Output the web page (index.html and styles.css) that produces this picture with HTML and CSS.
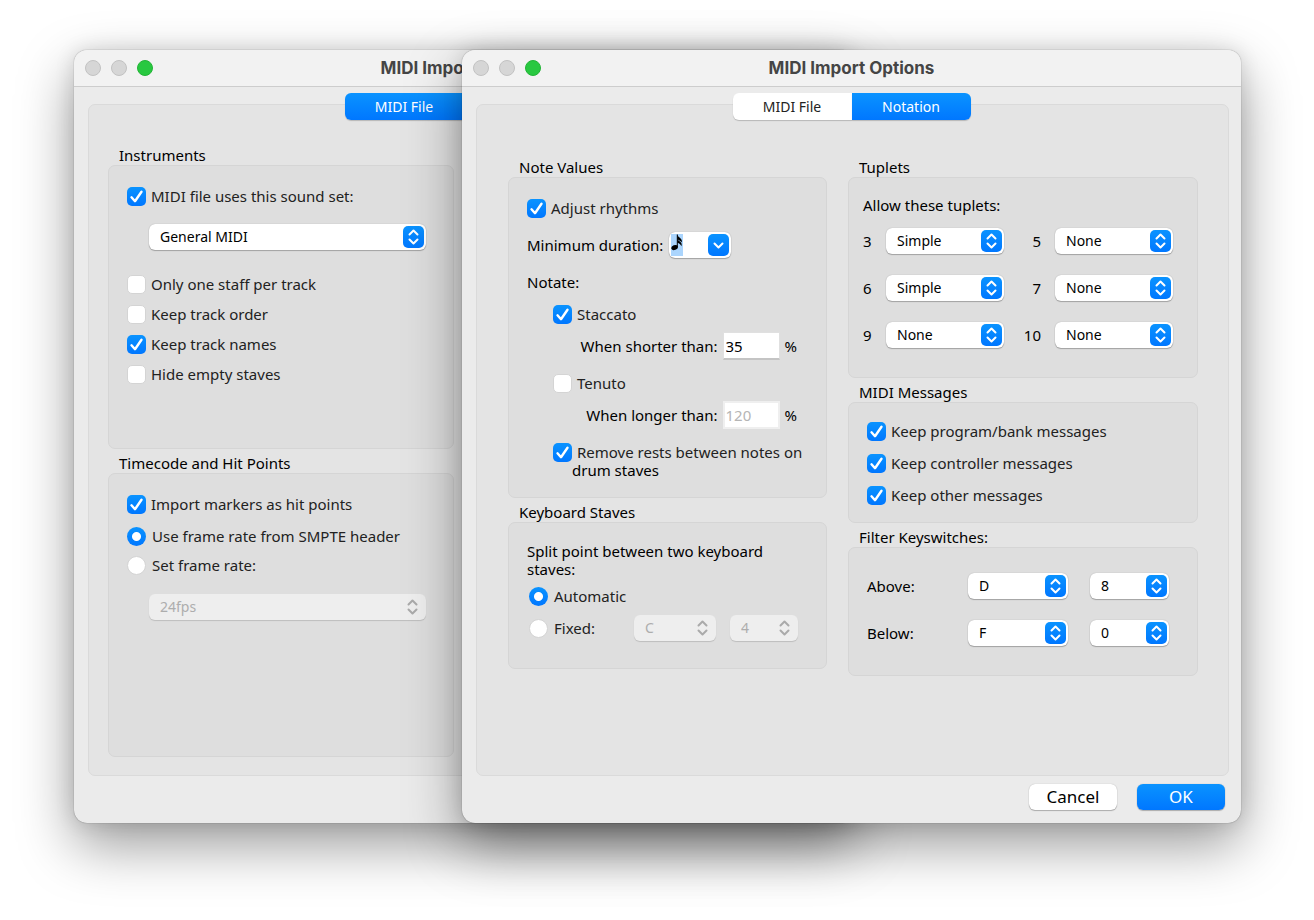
FILE: index.html
```html
<!DOCTYPE html>
<html lang="en">
<head>
    <meta charset="UTF-8">
    <meta name="viewport" content="width=device-width, initial-scale=1.0">
    <title>MIDI Import Options</title>
    <link rel="stylesheet" href="styles.css">
</head>
<body>
    <main class="desktop">
        <section class="window window-back">
            <header class="titlebar">
                <div class="lights"><span></span><span></span><span class="zoom"></span></div>
                <h1>MIDI Import Options</h1>
            </header>
            <nav class="tabs">
                <button type="button" class="active">MIDI File</button>
                <button type="button">Notation</button>
            </nav>
            <form class="panel panel-file">
                <section class="group">
                    <h2>Instruments</h2>
                    <div class="box box-file">
                        <label class="check"><input type="checkbox" checked>MIDI file uses this sound set:</label>
                        <div class="select wide sound-set">
                            <select aria-label="Sound set"><option>General MIDI</option></select>
                        </div>
                        <div class="stack">
                            <label class="check"><input type="checkbox">Only one staff per track</label>
                            <label class="check"><input type="checkbox">Keep track order</label>
                            <label class="check"><input type="checkbox" checked>Keep track names</label>
                            <label class="check"><input type="checkbox">Hide empty staves</label>
                        </div>
                    </div>
                </section>
                <section class="group">
                    <h2>Timecode and Hit Points</h2>
                    <div class="box box-file">
                        <label class="check"><input type="checkbox" checked>Import markers as hit points</label>
                        <label class="check radio smpte"><input type="radio" name="rate" checked>Use frame rate from SMPTE header</label>
                        <label class="check radio set-rate"><input type="radio" name="rate">Set frame rate:</label>
                        <div class="select wide frame-rate">
                            <select aria-label="Frame rate" disabled><option>24fps</option></select>
                        </div>
                    </div>
                </section>
            </form>
            <footer class="actions"></footer>
        </section>

        <section class="window window-front">
            <header class="titlebar">
                <div class="lights"><span></span><span></span><span class="zoom"></span></div>
                <h1>MIDI Import Options</h1>
            </header>
            <nav class="tabs">
                <button type="button">MIDI File</button>
                <button type="button" class="active">Notation</button>
            </nav>
            <form class="panel panel-notation" id="notation">
                <div class="column">
                    <section class="group">
                        <h2>Note Values</h2>
                        <div class="box box-notes">
                            <label class="check"><input type="checkbox" checked>Adjust rhythms</label>
                            <div class="row duration">
                                <label for="duration">Minimum duration:</label>
                                <div class="select combo">
                                    <select id="duration"><option aria-label="Sixteenth note"></option></select>
                                    <svg class="note" width="12" height="22" viewBox="0 0 12 22" aria-hidden="true">
                                        <rect width="12" height="22" fill="#abd5fd"/>
                                        <ellipse cx="3.6" cy="13.6" rx="3.4" ry="2.4" transform="rotate(-22 3.6 13.6)"/>
                                        <path d="M5.8 0.5h1v12.800h-1z"/>
                                        <path d="M6.300 0.500c.4 2 2 2.600 3.300 3.900 1.300 1.300 1.600 2.500 1 4.100-.7-1.700-2.500-2.300-4.300-3.300z"/>
                                        <path d="M6.300 4.500c.4 1.800 2 2.300 3.200 3.500 1.300 1.300 1.500 2.700.8 4.300-.4-1.900-2.200-2.800-4-3.700z"/>
                                    </svg>
                                </div>
                            </div>
                            <p class="notate">Notate:</p>
                            <label class="check nested staccato"><input type="checkbox" checked>Staccato</label>
                            <div class="row percent">
                                <label for="shorter">When shorter than:</label>
                                <input type="text" id="shorter" value="35">
                                <span>%</span>
                            </div>
                            <label class="check nested tenuto"><input type="checkbox">Tenuto</label>
                            <div class="row percent">
                                <label for="longer">When longer than:</label>
                                <input type="text" id="longer" value="120" disabled>
                                <span>%</span>
                            </div>
                            <label class="check nested rests" for="rests"><input type="checkbox" id="rests" checked>Remove rests between notes on</label>
                            <label class="rests-more" for="rests">drum staves</label>
                        </div>
                    </section>
                    <section class="group">
                        <h2>Keyboard Staves</h2>
                        <div class="box box-keyboard">
                            <p>Split point between two keyboard<br>staves:</p>
                            <label class="check radio"><input type="radio" name="split" checked>Automatic</label>
                            <div class="row fixed">
                                <label class="check radio"><input type="radio" name="split">Fixed:</label>
                                <div class="select split-note"><select aria-label="Split note" disabled><option>C</option></select></div>
                                <div class="select split-octave"><select aria-label="Split octave" disabled><option>4</option></select></div>
                            </div>
                        </div>
                    </section>
                </div>
                <div class="column">
                    <section class="group">
                        <h2>Tuplets</h2>
                        <div class="box box-tuplets">
                            <p>Allow these tuplets:</p>
                            <div class="tuplets">
                                <label for="t3">3</label>
                                <div class="select"><select id="t3"><option>Simple</option></select></div>
                                <label for="t5" class="second">5</label>
                                <div class="select"><select id="t5"><option>None</option></select></div>
                                <label for="t6">6</label>
                                <div class="select"><select id="t6"><option>Simple</option></select></div>
                                <label for="t7" class="second">7</label>
                                <div class="select"><select id="t7"><option>None</option></select></div>
                                <label for="t9">9</label>
                                <div class="select"><select id="t9"><option>None</option></select></div>
                                <label for="t10" class="second">10</label>
                                <div class="select"><select id="t10"><option>None</option></select></div>
                            </div>
                        </div>
                    </section>
                    <section class="group">
                        <h2>MIDI Messages</h2>
                        <div class="box box-messages">
                            <label class="check"><input type="checkbox" checked>Keep program/bank messages</label>
                            <label class="check"><input type="checkbox" checked>Keep controller messages</label>
                            <label class="check"><input type="checkbox" checked>Keep other messages</label>
                        </div>
                    </section>
                    <section class="group">
                        <h2>Filter Keyswitches:</h2>
                        <div class="box box-keyswitches">
                            <label for="above">Above:</label>
                            <div class="select"><select id="above"><option>D</option></select></div>
                            <div class="select"><select aria-label="Above octave"><option>8</option></select></div>
                            <label for="below">Below:</label>
                            <div class="select"><select id="below"><option>F</option></select></div>
                            <div class="select"><select aria-label="Below octave"><option>0</option></select></div>
                        </div>
                    </section>
                </div>
            </form>
            <footer class="actions">
                <button type="button">Cancel</button>
                <button type="submit" class="primary" form="notation">OK</button>
            </footer>
        </section>
    </main>
</body>
</html>
```
FILE: styles.css
```css
* { box-sizing: border-box; }
body { margin: 0; background: #fff; color: #000; font: 15px/18px "Noto Sans", "Open Sans", sans-serif; }
h1, h2, p { margin: 0; font: inherit; }
button, input, select { margin: 0; font: inherit; color: inherit; }

/* the two windows share the middle column, so the front one overlaps */
.desktop { display: grid; grid-template-columns: 388px 1fr 388px; min-height: 100vh; padding: 50px 73px 97px 74px; }
.window { display: flex; flex-direction: column; grid-row: 1; border-radius: 13px; background: #ebebeb; box-shadow: 0 0 1px rgba(0,0,0,.6), 0 22px 56px rgba(0,0,0,.4), 0 0 20px rgba(0,0,0,.12); }
.window-back { grid-column: 1 / 3; }
.window-front { grid-column: 2 / 4; z-index: 1; }

.titlebar { display: grid; grid-template-columns: 1fr auto 1fr; align-items: center; height: 37px; padding: 0 11px; border-bottom: 1px solid #cdcdcd; border-radius: 13px 13px 0 0; background: #f2f2f2; }
.titlebar h1 { font: bold 17px/20px Inter, sans-serif; color: #454545; }
.lights { display: flex; gap: 10px; }
.lights span { width: 16px; height: 16px; border: 1px solid #c2c2c2; border-radius: 50%; background: #d6d6d6; }
.lights .zoom { border-color: #23b437; background: #28c840; }

.tabs { display: flex; justify-content: center; margin: 6px 0 -16px; z-index: 1; }
.tabs button { width: 119px; height: 27px; padding: 0; border: 0; background: #fff; color: #222; font-size: 14px; box-shadow: 0 1px 1px rgba(0,0,0,.2); }
.tabs button:first-child { border-radius: 6px 0 0 6px; }
.tabs button:last-child { border-radius: 0 6px 6px 0; }
.tabs .active { background: linear-gradient(#0a93ff, #0077ff); color: #fff; }

.panel { flex: 1; margin: 0 12px 0 14px; border: 1px solid #dadada; border-radius: 7px; background: #e4e4e4; }
.panel-file { display: grid; grid-template-columns: 346px; grid-template-rows: 1fr 1fr; padding: 36px 19px 18px; }
.panel-notation { display: grid; grid-template-columns: 319fr 350fr; gap: 21px; padding: 48px 30px 0 31px; }
.group { display: flex; flex-direction: column; }
.group h2 { z-index: 1; padding: 5px 11px 1px; }
.box { border: 1px solid #d5d5d5; border-radius: 7px; background: #dedede; }
.box-file { flex: 1; padding: 17px 27px 0 18px; }
.box-notes { padding: 17px 18px 18px; }
.box-keyboard { padding: 19px 18px 27px; }
.box-tuplets { padding: 18px 24px 29px 14px; }
.box-messages { display: grid; gap: 6px; padding: 15px 18px 14px; }
.box-keyswitches { display: grid; grid-template-columns: 79px 100fr 79fr; gap: 21px 22px; align-items: center; padding: 25px 28px 29px 18px; }

.check { display: flex; align-items: center; gap: 5px; height: 26px; color: #222; white-space: nowrap; }
.check input { appearance: none; flex: none; width: 19px; height: 19px; border: 1px solid #d4d4d4; border-radius: 5px; background: #fff; }
.check input:checked { border: 0; background: url("data:image/svg+xml,%3Csvg xmlns='http://www.w3.org/2000/svg' viewBox='0 0 19 19' fill='none' stroke='white' stroke-width='2.400' stroke-linecap='round' stroke-linejoin='round'%3E%3Cpath d='M4.500 10.300 8 14.200 14.500 4.800'/%3E%3C/svg%3E"), linear-gradient(#0a93ff, #0077ff); }
.radio { gap: 6px; }
.check input[type="radio"] { border-radius: 50%; }
.check input[type="radio"]:checked { background: radial-gradient(circle, #fff 4px, transparent 5px), linear-gradient(#0a93ff, #0077ff); }
.nested { margin-left: 26px; }
.row { display: flex; align-items: center; }

.select { position: relative; height: 26px; }
.select select { appearance: none; display: block; width: 100%; height: 26px; padding: 0 28px 0 11px; border: 0; border-radius: 6px; font-size: 14px; box-shadow: 0 1px 1px rgba(0,0,0,.25), 0 0 1px rgba(0,0,0,.3);
    background: #fff url("data:image/svg+xml,%3Csvg xmlns='http://www.w3.org/2000/svg' width='21' height='22' fill='none'%3E%3Cdefs%3E%3ClinearGradient id='g' x2='0' y2='1'%3E%3Cstop stop-color='%230a93ff'/%3E%3Cstop offset='1' stop-color='%230077ff'/%3E%3C/linearGradient%3E%3C/defs%3E%3Crect width='21' height='22' rx='5' fill='url(%23g)'/%3E%3Cpath d='m6.500 8.500 4-4 4 4M6.500 13.500l4 4 4-4' stroke='white' stroke-width='2' stroke-linecap='round' stroke-linejoin='round'/%3E%3C/svg%3E") no-repeat right 2px center; }
.select select:disabled { opacity: 1; color: #adadad; background: #eee url("data:image/svg+xml,%3Csvg xmlns='http://www.w3.org/2000/svg' width='21' height='22' fill='none'%3E%3Cpath d='m6.500 8.500 4-4 4 4M6.500 13.500l4 4 4-4' stroke='%23aaaaaa' stroke-width='2' stroke-linecap='round' stroke-linejoin='round'/%3E%3C/svg%3E") no-repeat right 3px center; box-shadow: 0 1px 1px rgba(0,0,0,.15); }
.select.combo select { background-image: url("data:image/svg+xml,%3Csvg xmlns='http://www.w3.org/2000/svg' width='21' height='22' fill='none'%3E%3Cdefs%3E%3ClinearGradient id='g' x2='0' y2='1'%3E%3Cstop stop-color='%230a93ff'/%3E%3Cstop offset='1' stop-color='%230077ff'/%3E%3C/linearGradient%3E%3C/defs%3E%3Crect width='21' height='22' rx='5' fill='url(%23g)'/%3E%3Cpath d='m6.500 9.500 4 4 4-4' stroke='white' stroke-width='2' stroke-linecap='round' stroke-linejoin='round'/%3E%3C/svg%3E"); }
.combo { width: 62px; }
.note { position: absolute; left: 2px; top: 2px; pointer-events: none; }

.wide { margin-left: 22px; }
.sound-set { margin-top: 15px; }
.stack { display: grid; gap: 4px; margin-top: 21px; }
.smpte { margin-top: 6px; }
.set-rate { margin-top: 3px; }
.frame-rate { margin-top: 16px; }

.duration { gap: 6px; margin-top: 11px; }
.notate { margin-top: 15px; }
.staccato { margin-top: 10px; }
.percent { justify-content: flex-end; gap: 5px; margin: 5px 11px 0 0; }
.percent input { width: 57px; height: 28px; padding: 0 2px; border: 1px solid #e0e0e0; border-bottom: 2px solid #c4c4c4; background: #fff; }
.percent input:disabled { padding: 0 1px; color: #b5b5b5; border: 2px solid #efefef; }
.tenuto { margin-top: 10px; }
.rests { height: 18px; margin-top: 14px; }
.rests-more { display: block; margin-left: 45px; }

.box-keyboard .radio { margin: 5px 0 0 2px; }
.box-keyboard .fixed { margin-top: 6px; }
.box-keyboard .fixed .radio { flex: 1; margin-top: 0; }
.split-note { width: 82px; }
.split-octave { width: 68px; margin: 0 10px 0 14px; }

.tuplets { display: grid; grid-template-columns: 23px 1fr 51px 1fr; row-gap: 21px; align-items: center; margin-top: 14px; }
.second { padding-right: 14px; text-align: right; }

.actions { display: flex; justify-content: flex-end; gap: 20px; height: 47px; padding: 8px 16px 13px; }
.actions button { width: 88px; padding: 0; border: 0; border-radius: 6px; background: #fff; font-size: 17px; box-shadow: 0 1px 1px rgba(0,0,0,.25), 0 0 1px rgba(0,0,0,.3); }
.actions .primary { background: linear-gradient(#0a93ff, #0077ff); color: #fff; }
```
